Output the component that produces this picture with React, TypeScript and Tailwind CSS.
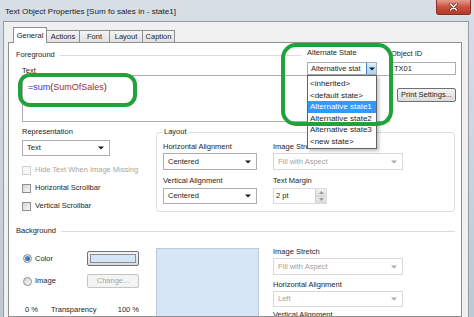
import type { ReactNode } from 'react'

function Caret({ muted }: { muted?: boolean }) {
  return (
    <svg width="6" height="4" viewBox="0 0 6 4" className="shrink-0">
      <path d="M0 0.5h6L3 3.5z" fill={muted ? '#a8a8a8' : '#1a1a1a'} />
    </svg>
  )
}

function Combo({ value, size, muted }: { value: string; size: string; muted?: boolean }) {
  return (
    <div
      className={`flex items-center justify-between bg-white border pl-[4px] pr-[5px] ${size} ${
        muted ? 'border-[#d9d9d9] text-[#a2a2a2]' : 'border-[#abadb3] text-[#1e1e1e]'
      }`}
    >
      <span className="whitespace-nowrap">{value}</span>
      <Caret muted={muted} />
    </div>
  )
}

function Check({ label, disabled }: { label: string; disabled?: boolean }) {
  return (
    <div className="h-[18px] flex items-center gap-[4px] whitespace-nowrap">
      <div
        className={`w-[9px] h-[9px] border shrink-0 ${
          disabled
            ? 'border-[#cfcfcf] bg-[#f6f6f6]'
            : 'border-[#8e8f8f] bg-gradient-to-br from-[#d6d6d6] to-[#f7f7f7]'
        }`}
      />
      <span className={disabled ? 'text-[#a6a6a6]' : ''}>{label}</span>
    </div>
  )
}

function Radio({ on }: { on?: boolean }) {
  return (
    <div className="ml-[1px] w-[9px] h-[9px] rounded-full border border-[#8e8f8f] bg-gradient-to-br from-[#d4d4d4] to-[#f8f8f8] flex items-center justify-center shrink-0">
      {on && <div className="w-[5px] h-[5px] rounded-full bg-gradient-to-br from-[#6aa4e0] to-[#1d4f91]" />}
    </div>
  )
}

function Label({ children, className = '' }: { children: ReactNode; className?: string }) {
  return <div className={`leading-[10px] h-[10px] whitespace-nowrap ${className}`}>{children}</div>
}

const states = ['<inherited>', '<default state>', 'Alternative state1', 'Alternative state2', 'Alternative state3', '<new state>']

export default function App() {
  return (
    <div className="relative w-[474px] h-[317px] overflow-hidden flex flex-col bg-gradient-to-b from-[#d8dfe7] to-[#bfc8d2] font-['Liberation_Sans',Arial,sans-serif] text-[7.5px] text-[#1e1e1e]">
      {/* Title bar */}
      <div className="h-[21px] flex items-start shrink-0">
        <span className="pl-[5px] pt-[7px] text-[8.1px] leading-[10px] text-[#1b1b1b]">
          Text Object Properties [Sum fo sales in - state1]
        </span>
        <div className="ml-auto mr-[3px] w-[35px] h-[15px] rounded-b-[3px] border border-t-0 border-[#83312a] bg-gradient-to-b from-[#e39c8e] via-[#c9513d] to-[#b53a28] flex items-center justify-center">
          <svg width="9" height="8" viewBox="0 0 9 8">
            <path d="M1.5 1l6 6M7.5 1l-6 6" stroke="#5a1a12" strokeWidth="2.6" strokeLinecap="round" />
            <path d="M1.5 1l6 6M7.5 1l-6 6" stroke="#ffffff" strokeWidth="1.5" strokeLinecap="round" />
          </svg>
        </div>
      </div>

      {/* Client area */}
      <div className="flex-1 min-h-0 ml-[3px] mr-[5px] border-l border-t border-r border-[#939ca6] bg-[#f0f0f0] flex flex-col pl-[4px] pr-[6px] pt-[5px]">
        {/* Tabs */}
        <div className="relative z-10 -mb-px flex items-end h-[16px] pl-[5px]">
          <div className="h-[16px] w-[34px] bg-white border border-b-0 border-[#8e8f8f] flex items-center justify-center">
            General
          </div>
          {[
            ['Actions', 'w-[33px]'],
            ['Font', 'w-[30px]'],
            ['Layout', 'w-[33px]'],
            ['Caption', 'w-[32px]'],
          ].map(([t, w]) => (
            <div
              key={t}
              className={`${w} mb-px h-[12px] border border-b-0 border-l-0 border-[#8e8f8f] bg-gradient-to-b from-[#f4f4f4] to-[#e1e1e1] flex items-center justify-center`}
            >
              {t}
            </div>
          ))}
        </div>

        {/* Tab page */}
        <div className="flex-1 min-h-0 bg-white border border-[#8e8f8f] flex flex-col overflow-hidden">
          {/* Row A */}
          <div className="flex items-start h-[27px] mt-[5px] shrink-0">
            <div className="w-[298px] flex flex-col pl-[7px]">
              <div className="flex items-center h-[10px] mt-[2px]">
                <span>Foreground</span>
                <div className="flex-1 h-px bg-[#dcdcdc] ml-[5px] mr-[6px]" />
              </div>
              <Label className="ml-[6px] mt-[6px]">Text</Label>
            </div>
            <div className="w-[70px] flex flex-col">
              <Label>Alternate State</Label>
              <div className="mt-[4px] h-[13px] flex bg-white border border-[#abadb3]">
                <span className="flex-1 pl-[3px] leading-[11px] whitespace-nowrap overflow-hidden">Alternative stat</span>
                <div className="w-[10px] bg-gradient-to-b from-[#d9eefc] to-[#a7d3f3] border-l border-[#3c7fb1] flex items-center justify-center">
                  <Caret />
                </div>
              </div>
            </div>
            <div className="ml-[14px] w-[65px] flex flex-col">
              <Label className="mt-px">Object ID</Label>
              <div className="mt-[3px] h-[13px] bg-white border border-[#abadb3] pl-[2px] leading-[11px]">TX01</div>
            </div>
          </div>

          {/* Row B */}
          <div className="flex items-start h-[47px] shrink-0">
            <div className="ml-[13px] w-[368px] h-[47px] border border-[#abadb3] bg-white pl-[5px] pt-[6px] text-[9px] leading-[10px]">
              <span className="text-[#23238a]">=</span>
              <span className="text-[#3636d0]">sum</span>
              <span className="text-[#2a2a2a]">(</span>
              <span className="text-[#9a2c3a]">SumOfSales</span>
              <span className="text-[#2a2a2a]">)</span>
            </div>
            <div className="ml-[7px] mt-[13px] w-[59px] h-[14px] border border-[#707070] rounded-[2px] bg-gradient-to-b from-[#f4f4f4] to-[#dcdcdc] flex items-center justify-center whitespace-nowrap">
              Print Settings...
            </div>
          </div>

          {/* Row C */}
          <div className="flex items-start h-[104px] shrink-0">
            <div className="ml-[13px] w-[88px] flex flex-col">
              <Label className="mt-[5px]">Representation</Label>
              <div className="mt-[3px]">
                <Combo value="Text" size="w-[88px] h-[16px]" />
              </div>
              <div className="mt-[5px] flex flex-col">
                <Check label="Hide Text When Image Missing" disabled />
                <Check label="Horizontal Scrollbar" />
                <Check label="Vertical Scrollbar" />
              </div>
            </div>
            <fieldset className="ml-[46px] mt-[5px] w-[299px] h-[85px] border border-[#d5dfe5] rounded-[3px] px-[6px]">
              <legend className="px-[1px] leading-[10px]">Layout</legend>
              <div className="flex gap-[16px]">
                <div className="w-[94px] flex flex-col">
                  <Label className="mt-[5px]">Horizontal Alignment</Label>
                  <div className="mt-[1px]">
                    <Combo value="Centered" size="w-[94px] h-[17px]" />
                  </div>
                  <Label className="mt-[6px]">Vertical Alignment</Label>
                  <div className="mt-[2px]">
                    <Combo value="Centered" size="w-[94px] h-[16px]" />
                  </div>
                </div>
                <div className="w-[130px] flex flex-col">
                  <Label className="mt-[5px]">Image Stretch</Label>
                  <div className="mt-[1px]">
                    <Combo value="Fill with Aspect" size="w-[130px] h-[17px]" muted />
                  </div>
                  <Label className="mt-[6px]">Text Margin</Label>
                  <div className="mt-[2px] w-[54px] h-[16px] flex bg-white border border-[#dcdcdc]">
                    <span className="flex-1 pl-[2px] pt-[2px] leading-[9px]">2 pt</span>
                    <div className="w-[11px] flex flex-col border-l border-[#d0d0d0]">
                      <div className="flex-1 bg-gradient-to-b from-[#f2f2f2] to-[#dedede] border-b border-[#cfcfcf] flex items-center justify-center">
                        <svg width="5" height="3" viewBox="0 0 5 3">
                          <path d="M0 3h5L2.5 0z" fill="#9a9a9a" />
                        </svg>
                      </div>
                      <div className="flex-1 bg-gradient-to-b from-[#ececec] to-[#d8d8d8] flex items-center justify-center">
                        <svg width="5" height="3" viewBox="0 0 5 3">
                          <path d="M0 0h5L2.5 3z" fill="#9a9a9a" />
                        </svg>
                      </div>
                    </div>
                  </div>
                </div>
              </div>
            </fieldset>
          </div>

          {/* Background header */}
          <div className="flex items-center h-[10px] pl-[7px] shrink-0">
            <span>Background</span>
            <div className="flex-1 h-px bg-[#dcdcdc] ml-[5px] mr-[6px]" />
          </div>

          {/* Row D */}
          <div className="flex items-start shrink-0">
            <div className="ml-[13px] w-[117px] flex flex-col">
              <div className="mt-[15px] h-[15px] flex items-center">
                <Radio on />
                <span className="ml-[3px]">Color</span>
                <div className="ml-auto w-[52px] h-[15px] border border-[#707070] rounded-[2px] bg-gradient-to-b from-[#f4f4f4] to-[#dcdcdc] p-[2px]">
                  <div className="w-full h-full bg-[#d4e5f7] border border-[#8d8d8d]" />
                </div>
              </div>
              <div className="mt-[8px] h-[14px] flex items-center">
                <Radio />
                <span className="ml-[3px]">Image</span>
                <div className="ml-auto w-[52px] h-[14px] border border-[#c5c5c5] rounded-[2px] bg-[#f4f4f4] text-[#a6a6a6] flex items-center justify-center">
                  Change...
                </div>
              </div>
              <div className="mt-[16px] h-[12px] flex items-center whitespace-nowrap">
                <span className="ml-[3px]">0 %</span>
                <span className="ml-[13px]">Transparency</span>
                <span className="ml-auto">100 %</span>
              </div>
            </div>
            <div className="ml-[17px] mt-[12px] w-[103px] h-[90px] bg-[#d6e6f6] border border-[#bcc8d4]" />
            <div className="ml-[14px] w-[130px] flex flex-col">
              <Label className="mt-[11px]">Image Stretch</Label>
              <div className="mt-[1px]">
                <Combo value="Fill with Aspect" size="w-[130px] h-[17px]" muted />
              </div>
              <Label className="mt-[5px]">Horizontal Alignment</Label>
              <div className="mt-[1px]">
                <Combo value="Left" size="w-[130px] h-[16px]" muted />
              </div>
              <Label className="mt-[3px]">Vertical Alignment</Label>
            </div>
          </div>
        </div>
      </div>

      {/* Open dropdown list */}
      <div className="absolute left-[307px] top-[75px] w-[70px] h-[74px] bg-white border border-[#646464] shadow-[2px_2px_3px_rgba(0,0,0,0.25)] pt-[2px] text-[8px]">
        {states.map(s => (
          <div
            key={s}
            className={`h-[11.6px] leading-[11.6px] px-[2px] whitespace-nowrap ${
              s === 'Alternative state1' ? 'bg-[#3399ff] text-white' : ''
            }`}
          >
            {s}
          </div>
        ))}
      </div>

      {/* Green annotation marks */}
      <div className="absolute left-[18px] top-[73px] w-[119px] h-[34px] border-[4px] border-[#22a23a] rounded-[12px] pointer-events-none" />
      <div className="absolute left-[281px] top-[43px] w-[112px] h-[83px] border-[4px] border-[#22a23a] rounded-[15px] pointer-events-none" />
    </div>
  )
}
